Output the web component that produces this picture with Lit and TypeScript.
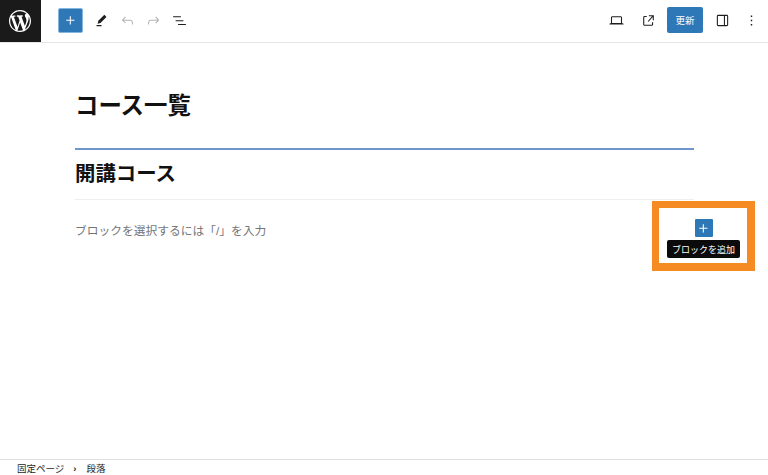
import { LitElement, html, css, svg } from "lit";
import { customElement } from "lit/decorators.js";

const P = {
  wp: "M20 10c0-5.51-4.49-10-10-10C4.48 0 0 4.49 0 10c0 5.52 4.48 10 10 10 5.51 0 10-4.48 10-10zM7.78 15.37L4.37 6.22c.55-.02 1.17-.08 1.17-.08.5-.06.44-1.13-.06-1.11 0 0-1.45.11-2.37.11-.18 0-.37 0-.58-.01C4.12 2.69 6.87 1.11 10 1.11c2.33 0 4.45.87 6.05 2.34-.68-.11-1.65.39-1.65 1.58 0 .74.45 1.36.9 2.1.35.61.55 1.36.55 2.46 0 1.49-1.4 5-1.4 5l-3.03-8.37c.54-.02.82-.17.82-.17.5-.05.44-1.25-.06-1.22 0 0-1.44.12-2.38.12-.87 0-2.33-.12-2.33-.12-.5-.03-.56 1.2-.06 1.22l.92.08 1.26 3.41zM17.41 10c.24-.64.74-1.87.43-4.25.7 1.29 1.05 2.71 1.05 4.25 0 3.29-1.73 6.24-4.4 7.78.97-2.59 1.94-5.2 2.92-7.78zM6.1 18.09C3.12 16.65 1.11 13.53 1.11 10c0-1.3.23-2.48.72-3.59C3.25 10.3 4.67 14.2 6.1 18.09zm4.03-6.63l2.58 6.98c-.86.29-1.76.45-2.71.45-.79 0-1.57-.11-2.29-.33.81-2.38 1.62-4.74 2.42-7.1z",
  plus: "M11 12.5V17.5H12.5V12.5H17.5V11H12.5V6H11V11H6V12.5H11Z",
  edit: "m19 7-3-3-8.5 8.5-1 4 4-1L19 7Zm-7 11.5H5V20h7v-1.5Z",
  undo: "M18.3 11.7c-.6-.6-1.4-.9-2.3-.9H6.7l2.9-3.3-1.1-1-4.5 5L8.5 16l1-1-2.7-2.7H16c.5 0 .9.2 1.3.5 1 1 1 3.4 1 4.5v.3h1.5v-.2c0-1.5 0-4.3-1.5-5.7z",
  redo: "M15.6 6.5l-1.1 1 2.9 3.3H8c-.9 0-1.7.3-2.3.9-1.4 1.5-1.4 4.2-1.4 5.6v.2h1.5v-.3c0-1.1 0-3.5 1-4.5.3-.3.7-.5 1.3-.5h9.2L14.5 15l1.1 1.1 4.6-4.6-4.6-5z",
  list: "M3 6h11v1.5H3V6Zm3.5 5.5h11V13h-11v-1.5ZM21 17H10v1.5h11V17Z",
  laptop: "M20.5 16h-.7V8c0-1.1-.9-2-2-2H6.2c-1.1 0-2 .9-2 2v8h-.7c-.8 0-1.5.7-1.5 1.5h20c0-.8-.7-1.5-1.5-1.5zM5.7 8c0-.3.2-.5.5-.5h11.6c.3 0 .5.2.5.5v7.6H5.7V8z",
  ext: "M19.5 4.5h-7V6h4.44l-5.97 6.97 1.14.97L18 7.03v4.47h1.5v-7Zm-13 1a2 2 0 0 0-2 2v10a2 2 0 0 0 2 2h10a2 2 0 0 0 2-2v-3H17v3a.5.5 0 0 1-.5.5h-10a.5.5 0 0 1-.5-.5v-10a.5.5 0 0 1 .5-.5h3V5.5h-3Z",
  side: "M18 4H6c-1.1 0-2 .9-2 2v12c0 1.1.9 2 2 2h12c1.1 0 2-.9 2-2V6c0-1.1-.9-2-2-2zm-4 14.5H6c-.3 0-.5-.2-.5-.5V6c0-.3.2-.5.5-.5h8v13zm4.5-.5c0 .3-.2.5-.5.5h-2.5v-13H18c.3 0 .5.2.5.5v12z",
  more: "M13 19h-2v-2h2v2zm0-6h-2v-2h2v2zm0-6h-2V5h2v2z",
};

const icon = (d: string, cls = "") =>
  html`<svg class="ic ${cls}" viewBox="0 0 24 24" aria-hidden="true">${svg`<path d=${d}></path>`}</svg>`;

@customElement("app-root")
export class AppRoot extends LitElement {
  static styles = css`
    :host {
      display: flex;
      flex-direction: column;
      position: relative;
      width: 768px;
      height: 475px;
      overflow: hidden;
      background: #fff;
      color: #1e1e1e;
      font-family: "Liberation Sans", "Noto Sans CJK JP", sans-serif;
    }
    .bar {
      flex: none;
      height: 42px;
      display: flex;
      align-items: center;
      border-bottom: 1px solid #e6e6e6;
    }
    .logo {
      width: 41px;
      height: 42px;
      flex: none;
      box-sizing: border-box;
      padding: 0 2px 1px 0;
      background: #1a1a1a;
      display: flex;
      align-items: center;
      justify-content: center;
    }
    .logo svg {
      width: 22px;
      height: 22px;
      fill: #fff;
    }
    .tools {
      display: flex;
      align-items: center;
      margin: 0 0 2px 17px;
    }
    .add {
      width: 25px;
      height: 25px;
      border-radius: 2px;
      background: #2f78b7;
      border: 1.5px solid #86b6dd;
      box-sizing: border-box;
      display: flex;
      align-items: center;
      justify-content: center;
      margin-right: 5px;
    }
    .add .ic {
      fill: #fff;
    }
    .slot {
      width: 26px;
      height: 26px;
      display: flex;
      align-items: center;
      justify-content: center;
      flex: none;
    }
    .ic {
      width: 17px;
      height: 17px;
      fill: #1e1e1e;
      flex: none;
    }
    .ic.off {
      fill: #b4b4b4;
    }
    .right {
      margin: 0 0 2px auto;
      display: flex;
      align-items: center;
      padding-right: 4px;
    }
    .gap {
      margin-left: 6px;
    }
    .tight {
      margin-left: 3px;
    }
    .save {
      width: 36px;
      height: 26px;
      border-radius: 2px;
      background: #2f78b7;
      color: #fff;
      font-size: 9.5px;
      display: flex;
      align-items: center;
      justify-content: center;
      margin: 0 6px;
    }
    .canvas {
      flex: 1;
      padding: 0 74px 0 75px;
    }
    h1 {
      margin: 49px 0 0;
      font-size: 23.4px;
      line-height: 28px;
      font-weight: 700;
      color: #111;
    }
    .rule {
      height: 0;
      margin-top: 28px;
      border-top: 2px solid #6f97cd;
    }
    h2 {
      margin: 11px 0 0;
      font-size: 20.4px;
      line-height: 26px;
      font-weight: 700;
      color: #111;
    }
    .faint {
      margin-top: 12px;
      border-top: 1px solid #eeeeee;
    }
    .ph {
      margin-top: 23px;
      font-size: 11.75px;
      line-height: 16px;
      color: #757575;
    }
    .foot {
      flex: none;
      height: 14px;
      padding: 1px 0 0 17px;
      border-top: 1px solid #e0e0e0;
      display: flex;
      align-items: center;
      font-size: 9.5px;
      color: #1e1e1e;
    }
    .foot .sep {
      margin: 0 10px 0 9px;
      font-weight: 700;
    }
    .callout {
      position: absolute;
      left: 652px;
      top: 201px;
      width: 103px;
      height: 70px;
      box-sizing: border-box;
      border-style: solid;
      border-color: #f68b24;
      border-width: 7px 8px 8px 7px;
      display: flex;
      flex-direction: column;
      align-items: center;
      padding: 11px 0 0 1px;
    }
    .mini {
      width: 18px;
      height: 18px;
      border-radius: 1px;
      background: #2f78b7;
      display: flex;
      align-items: center;
      justify-content: center;
      flex: none;
    }
    .mini .ic {
      fill: #fff;
      width: 17px;
      height: 17px;
    }
    .tip {
      margin-top: 3px;
      width: 73px;
      height: 18px;
      flex: none;
      border-radius: 2px;
      background: #0b0b0b;
      color: #fff;
      font-size: 9px;
      display: flex;
      align-items: center;
      justify-content: center;
      white-space: nowrap;
    }
  `;

  render() {
    return html`
      <div class="bar">
        <div class="logo"><svg viewBox="0 0 20 20">${svg`<path d=${P.wp}></path>`}</svg></div>
        <div class="tools">
          <div class="add">${icon(P.plus)}</div>
          <div class="slot">${icon(P.edit)}</div>
          <div class="slot">${icon(P.undo, "off")}</div>
          <div class="slot">${icon(P.redo, "off")}</div>
          <div class="slot">${icon(P.list)}</div>
        </div>
        <div class="right">
          <div class="slot">${icon(P.laptop)}</div>
          <div class="slot gap">${icon(P.ext)}</div>
          <div class="save">更新</div>
          <div class="slot">${icon(P.side)}</div>
          <div class="slot tight">${icon(P.more)}</div>
        </div>
      </div>
      <div class="canvas">
        <h1>コース一覧</h1>
        <div class="rule"></div>
        <h2>開講コース</h2>
        <div class="faint"></div>
        <div class="ph">ブロックを選択するには「/」を入力</div>
      </div>
      <div class="foot"><span>固定ページ</span><span class="sep">›</span><span>段落</span></div>
      <div class="callout">
        <div class="mini">${icon(P.plus)}</div>
        <div class="tip">ブロックを追加</div>
      </div>
    `;
  }
}
